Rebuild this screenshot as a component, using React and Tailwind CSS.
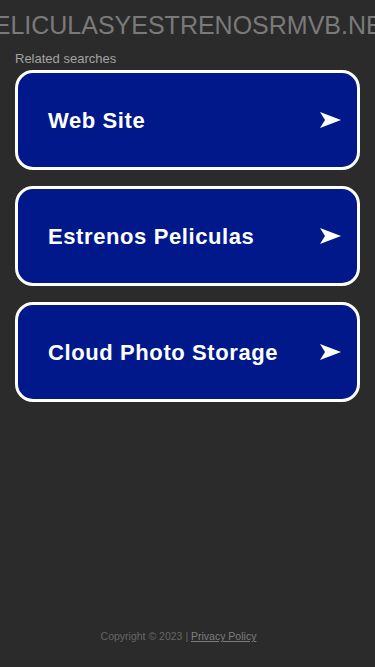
const LINKS = ['Web Site', 'Estrenos Peliculas', 'Cloud Photo Storage']

function Arrow() {
  return (
    <svg width="21" height="16" viewBox="0 0 21 16" className="flex-shrink-0">
      <path d="M0 0 L21 8 L0 16 L5 8 Z" fill="#ffffff" />
    </svg>
  )
}

export default function App() {
  return (
    <div className="min-h-[667px] bg-[#2b2b2b] flex flex-col" style={{ fontFamily: '"Liberation Sans", Arial, sans-serif' }}>
      {/* Domain header */}
      <div className="h-[46px] overflow-hidden flex justify-center">
        <div className="whitespace-nowrap text-[25px] leading-none text-[#7a7a7a] pt-[13px]">
          PELICULASYESTRENOSRMVB.NET
        </div>
      </div>

      <div className="px-[15px]">
        <p className="text-[13px] text-[#a3a3a3] leading-none pt-[6px] pb-[5px]">Related searches</p>
        <div className="flex flex-col gap-[16px]">
          {LINKS.map(label => (
            <a
              key={label}
              href="#"
              className="h-[100px] rounded-[18px] border-[3px] border-white bg-[#00188a] flex items-center justify-between pl-[30px] pr-[16px]"
            >
              <span className="text-white font-bold text-[22px] tracking-[0.6px]">{label}</span>
              <Arrow />
            </a>
          ))}
        </div>
      </div>

      <div className="flex-1" />
      <div className="text-center text-[10.5px] text-[#666666] pb-[22px] pr-[18px]">
        Copyright © 2023 | <a href="#" className="underline text-[#7d7d7d]">Privacy Policy</a>
      </div>
    </div>
  )
}
